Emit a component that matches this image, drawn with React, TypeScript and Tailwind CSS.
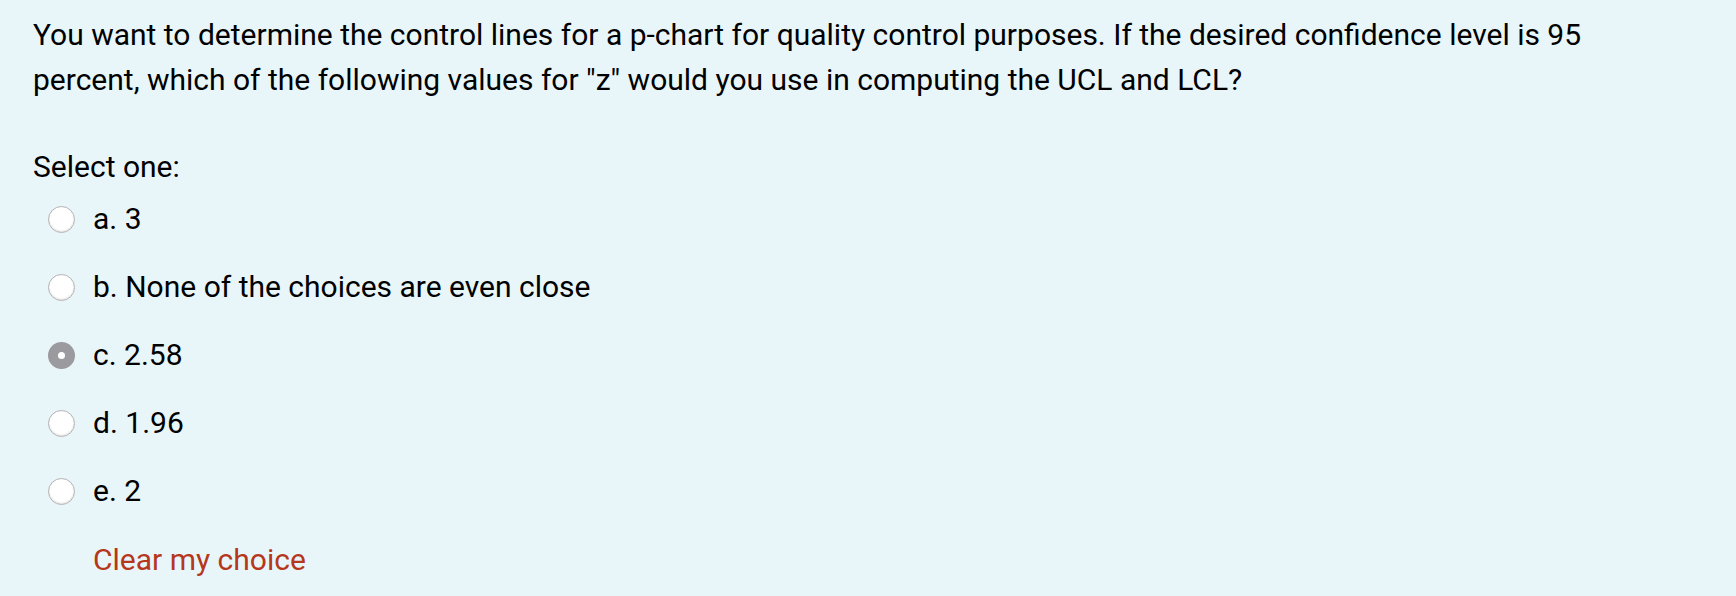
import { useState } from "react";

const options = [
  { key: "a", label: "3" },
  { key: "b", label: "None of the choices are even close" },
  { key: "c", label: "2.58" },
  { key: "d", label: "1.96" },
  { key: "e", label: "2" },
];

export default function App() {
  const [picked, setPicked] = useState<string | null>("c");

  return (
    <div
      className="w-[1736px] h-[596px] bg-[#e9f6f9] text-black pl-[33px] pt-[12px]"
      style={{ fontFamily: "Roboto, 'Noto Sans', sans-serif" }}
    >
      <p className="text-[30px] leading-[45px] w-[1620px]">
        You want to determine the control lines for a p-chart for quality control purposes. If the desired confidence level is 95
        percent, which of the following values for "z" would you use in computing the UCL and LCL?
      </p>

      <div className="mt-[47px] text-[30px] leading-[36px]">Select one:</div>

      <div className="flex flex-col">
        {options.map((o) => {
          const on = picked === o.key;
          return (
            <label key={o.key} className="flex items-center h-[68px] cursor-pointer">
              <span className="w-[60px] flex pl-[15px]">
                {on ? (
                  <span className="w-[27px] h-[27px] rounded-full bg-[#9b9a9f] flex items-center justify-center">
                    <span className="w-[7px] h-[7px] rounded-full bg-white" />
                  </span>
                ) : (
                  <span className="w-[27px] h-[27px] rounded-full bg-white border border-[#b3b3b3] shadow-[inset_0_-1px_2px_rgba(0,0,0,0.12)]" />
                )}
              </span>
              <input
                type="radio"
                name="z"
                className="hidden"
                checked={on}
                onChange={() => setPicked(o.key)}
              />
              <span className="text-[30px] leading-[40px]">
                {o.key}. {o.label}
              </span>
            </label>
          );
        })}
      </div>

      <button
        className="ml-[60px] mt-[15px] text-[30px] leading-[40px] text-[#b5381c]"
        onClick={() => setPicked(null)}
      >
        Clear my choice
      </button>
    </div>
  );
}
